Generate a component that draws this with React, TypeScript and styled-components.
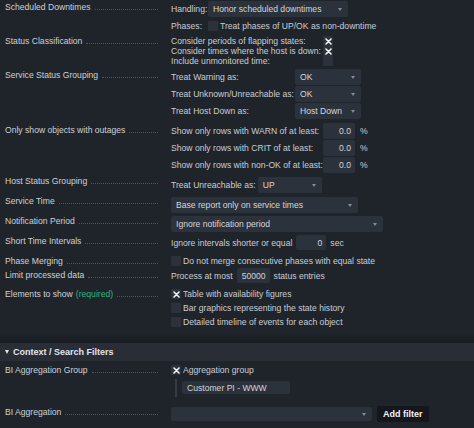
import React from "react";
import styled, { createGlobalStyle } from "styled-components";

const Global = createGlobalStyle`
  html, body { margin: 0; padding: 0; }
  body {
    background: #1f242b;
    font-family: "Liberation Sans", Arial, sans-serif;
    font-size: 8.6px;
    color: #c9cdd3;
  }
`;

const Page = styled.div`
  width: 474px;
  height: 428px;
  overflow: hidden;
  display: flex;
  flex-direction: column;
`;

const Section = styled.div`
  display: flex;
  flex-direction: column;
`;

const FormRow = styled.div`
  display: flex;
  align-items: flex-start;
`;

const Legend = styled.div<{ $pt: number }>`
  width: 153px;
  flex: none;
  padding: ${(p) => p.$pt}px 13px 0 5px;
  display: flex;
  align-items: flex-end;
  height: 12px;
  line-height: 12px;
  box-sizing: content-box;
  color: #cdd1d6;
  white-space: nowrap;
`;

const Leader = styled.span`
  flex: 1;
  margin: 0 0 3px 4px;
  border-bottom: 1px dotted #50565e;
`;

const Required = styled.span`
  color: #2fb57b;
  margin-left: 3px;
`;

const Content = styled.div<{ $pt: number; $pb: number }>`
  display: flex;
  flex-direction: column;
  min-width: 0;
  padding-top: ${(p) => p.$pt}px;
  padding-bottom: ${(p) => p.$pb}px;
`;

const Line = styled.div<{ $h: number; $gap?: number }>`
  display: flex;
  align-items: center;
  height: ${(p) => p.$h}px;
  gap: ${(p) => p.$gap ?? 2}px;
  white-space: nowrap;
`;

const PairGrid = styled.div<{ $col: number; $rowH: number; $rowGap: number }>`
  display: grid;
  grid-template-columns: ${(p) => p.$col}px max-content max-content;
  grid-auto-rows: ${(p) => p.$rowH}px;
  row-gap: ${(p) => p.$rowGap}px;
  align-items: center;
  white-space: nowrap;
`;

const Field = styled.div<{ $w: number; $h?: number }>`
  width: ${(p) => p.$w}px;
  height: ${(p) => p.$h ?? 16}px;
  box-sizing: border-box;
  background: #2c323b;
  border-radius: 2px;
  display: flex;
  align-items: center;
  color: #d3d6db;
`;

const SelectBox = styled(Field)`
  justify-content: space-between;
  padding: 0 6px 0 5px;
`;

const Caret = styled.span`
  width: 0;
  height: 0;
  border-left: 2.5px solid transparent;
  border-right: 2.5px solid transparent;
  border-top: 3px solid #858b93;
  margin-top: 1px;
`;

const NumBox = styled(Field)`
  justify-content: flex-end;
  padding-right: 4px;
`;

const Unit = styled.span<{ $ml: number }>`
  margin-left: ${(p) => p.$ml}px;
`;

const Box = styled.span`
  width: 10px;
  height: 10px;
  flex: none;
  background: #2c323b;
  border-radius: 1px;
  display: inline-flex;
  align-items: center;
  justify-content: center;
`;

const CheckLabel = styled.span`
  margin-left: 2px;
`;

const Separator = styled.div`
  height: 10px;
  background: linear-gradient(#1f242b, #191d23);
`;

const Header = styled.div`
  height: 18px;
  background: #292e36;
  display: flex;
  align-items: center;
  padding-left: 5px;
  gap: 4px;
  font-weight: bold;
  font-size: 9px;
  color: #e2e5e9;
`;

const Tri = styled.span`
  width: 0;
  height: 0;
  border-left: 2.5px solid transparent;
  border-right: 2.5px solid transparent;
  border-top: 4px solid #e2e5e9;
`;

const Nested = styled.div`
  margin: 3px 0 0 4px;
  border-left: 2px solid #363c44;
  padding: 2px 0 3px 5px;
`;

const Button = styled.div`
  height: 16px;
  padding: 0 6px;
  background: #14171c;
  border-radius: 2px;
  display: flex;
  align-items: center;
  font-weight: bold;
  font-size: 9px;
  color: #f2f3f5;
`;

const XMark = () => (
  <svg width="7" height="7" viewBox="0 0 7 7">
    <path d="M1 1L6 6M6 1L1 6" stroke="#f4f5f7" strokeWidth="1.6" strokeLinecap="round" />
  </svg>
);

const Check = ({ on }: { on?: boolean }) => <Box>{on ? <XMark /> : null}</Box>;

const Select = ({ w, h, value }: { w: number; h?: number; value: string }) => (
  <SelectBox $w={w} $h={h}>
    <span>{value}</span>
    <Caret />
  </SelectBox>
);

const Row = ({
  label,
  required,
  pt,
  pb,
  lp,
  children,
}: {
  label: string;
  required?: boolean;
  pt: number;
  pb: number;
  lp: number;
  children: React.ReactNode;
}) => (
  <FormRow>
    <Legend $pt={lp}>
      <span>{label}</span>
      {required ? <Required>(required)</Required> : null}
      <Leader />
    </Legend>
    <Content $pt={pt} $pb={pb}>
      {children}
    </Content>
  </FormRow>
);

export default function App() {
  return (
    <Page>
      <Global />
      <Section>
        <Row label="Scheduled Downtimes" pt={1} pb={1} lp={1}>
          <PairGrid $col={37} $rowH={16} $rowGap={1}>
            <span>Handling:</span>
            <Select w={140} value="Honor scheduled downtimes" />
            <span />
            <span>Phases:</span>
            <Line $h={12} $gap={0}>
              <Check />
              <CheckLabel>Treat phases of UP/OK as non-downtime</CheckLabel>
            </Line>
            <span />
          </PairGrid>
        </Row>
        <Row label="Status Classification" pt={1} pb={1} lp={0}>
          <PairGrid $col={152} $rowH={10} $rowGap={0}>
            <span>Consider periods of flapping states:</span>
            <Check on />
            <span />
            <span>Consider times where the host is down:</span>
            <Check on />
            <span />
            <span>Include unmonitored time:</span>
            <Check />
            <span />
          </PairGrid>
        </Row>
        <Row label="Service Status Grouping" pt={2} pb={2} lp={2}>
          <PairGrid $col={124} $rowH={16} $rowGap={1}>
            <span>Treat Warning as:</span>
            <Select w={66} value="OK" />
            <span />
            <span>Treat Unknown/Unreachable as:</span>
            <Select w={66} value="OK" />
            <span />
            <span>Treat Host Down as:</span>
            <Select w={66} value="Host Down" />
            <span />
          </PairGrid>
        </Row>
        <Row label="Only show objects with outages" pt={2} pb={2} lp={3}>
          <PairGrid $col={152} $rowH={16} $rowGap={1}>
            <span>Show only rows with WARN of at least:</span>
            <NumBox $w={32}>0.0</NumBox>
            <Unit $ml={5}>%</Unit>
            <span>Show only rows with CRIT of at least:</span>
            <NumBox $w={32}>0.0</NumBox>
            <Unit $ml={5}>%</Unit>
            <span>Show only rows with non-OK of at least:</span>
            <NumBox $w={32}>0.0</NumBox>
            <Unit $ml={5}>%</Unit>
          </PairGrid>
        </Row>
        <Row label="Host Status Grouping" pt={2} pb={2} lp={0}>
          <Line $h={16} $gap={2}>
            <span>Treat Unreachable as:</span>
            <Select w={64} value="UP" />
          </Line>
        </Row>
        <Row label="Service Time" pt={2} pb={1} lp={0}>
          <Select w={187} value="Base report only on service times" />
        </Row>
        <Row label="Notification Period" pt={2} pb={1} lp={1}>
          <Select w={212} value="Ignore notification period" />
        </Row>
        <Row label="Short Time Intervals" pt={2} pb={2} lp={2}>
          <Line $h={15} $gap={0}>
            <span>Ignore intervals shorter or equal</span>
            <Unit $ml={4} />
            <NumBox $w={30} $h={15}>0</NumBox>
            <Unit $ml={4}>sec</Unit>
          </Line>
        </Row>
        <Row label="Phase Merging" pt={3} pb={0} lp={3}>
          <Line $h={12} $gap={0}>
            <Check />
            <CheckLabel>Do not merge consecutive phases with equal state</CheckLabel>
          </Line>
        </Row>
        <Row label="Limit processed data" pt={1} pb={1} lp={2}>
          <Line $h={15} $gap={4}>
            <span>Process at most</span>
            <NumBox $w={33} $h={15}>50000</NumBox>
            <span>status entries</span>
          </Line>
        </Row>
        <Row label="Elements to show" required pt={3} pb={4} lp={4}>
          <Line $h={14} $gap={0}>
            <Check on />
            <CheckLabel>Table with availability figures</CheckLabel>
          </Line>
          <Line $h={14} $gap={0}>
            <Check />
            <CheckLabel>Bar graphics representing the state history</CheckLabel>
          </Line>
          <Line $h={14} $gap={0}>
            <Check />
            <CheckLabel>Detailed timeline of events for each object</CheckLabel>
          </Line>
        </Row>
      </Section>
      <Separator />
      <Header>
        <Tri />
        <span>Context / Search Filters</span>
      </Header>
      <Section>
        <Row label="BI Aggregation Group" pt={3} pb={6} lp={3}>
          <Line $h={12} $gap={0}>
            <Check on />
            <CheckLabel>Aggregation group</CheckLabel>
          </Line>
          <Nested>
            <Field $w={108} $h={13}>
              <Unit $ml={5}>Customer PI - WWW</Unit>
            </Field>
          </Nested>
        </Row>
        <Row label="BI Aggregation" pt={3} pb={4} lp={3}>
          <Line $h={16} $gap={5}>
            <Select w={201} h={14} value="" />
            <Button>Add filter</Button>
          </Line>
        </Row>
      </Section>
    </Page>
  );
}
